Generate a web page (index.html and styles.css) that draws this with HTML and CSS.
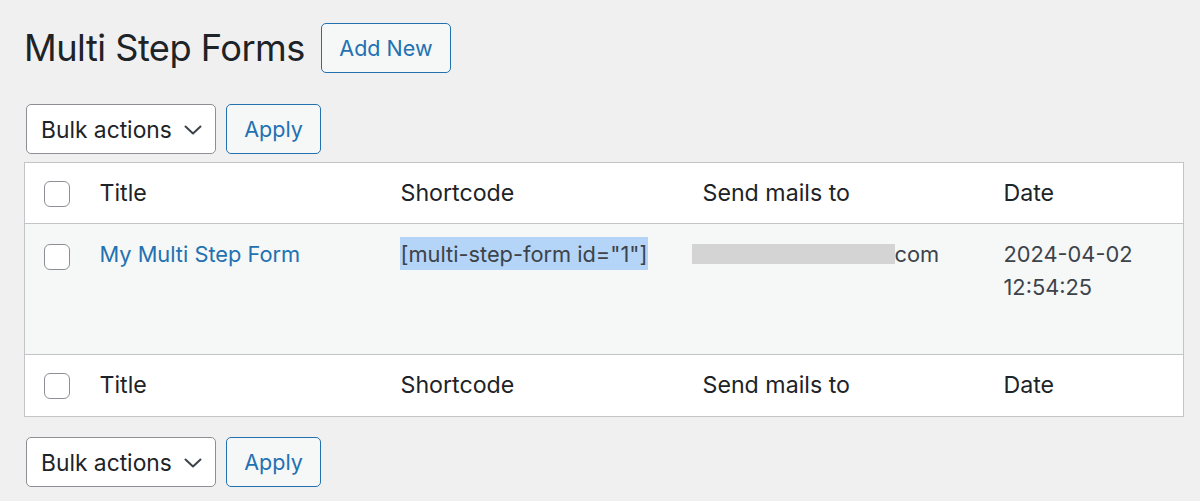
FILE: index.html
```html
<!DOCTYPE html>
<html lang="en">
<head>
<meta charset="utf-8">
<title>Multi Step Forms</title>
<link rel="stylesheet" href="styles.css">
</head>
<body>
<div class="wrap">
  <div class="page-header">
    <h1 class="page-title">Multi Step Forms</h1>
    <a class="button add-new" href="#">Add New</a>
  </div>

  <div class="tablenav top">
    <div class="select">
      <span>Bulk actions</span>
      <svg class="chevron" width="18" height="10" viewBox="0 0 18 10"><path d="M1.5 1.5 L9 8.5 L16.5 1.5" fill="none" stroke="#3c434a" stroke-width="2" stroke-linecap="round" stroke-linejoin="round"/></svg>
    </div>
    <a class="button" href="#">Apply</a>
  </div>

  <table class="list-table">
    <colgroup>
      <col class="c-cb"><col class="c-title"><col class="c-short"><col class="c-mail"><col class="c-date">
    </colgroup>
    <thead>
      <tr>
        <th class="cb"><span class="checkbox"></span></th>
        <th>Title</th>
        <th>Shortcode</th>
        <th>Send mails to</th>
        <th>Date</th>
      </tr>
    </thead>
    <tbody>
      <tr class="alt">
        <td class="cb"><span class="checkbox"></span></td>
        <td><a class="row-title" href="#">My Multi Step Form</a></td>
        <td><span class="selected">[multi-step-form id="1"]</span></td>
        <td><span class="redact"></span><span class="mail-end">com</span></td>
        <td>2024-04-02<br>12:54:25</td>
      </tr>
    </tbody>
    <tfoot>
      <tr>
        <th class="cb"><span class="checkbox"></span></th>
        <th>Title</th>
        <th>Shortcode</th>
        <th>Send mails to</th>
        <th>Date</th>
      </tr>
    </tfoot>
  </table>

  <div class="tablenav bottom">
    <div class="select">
      <span>Bulk actions</span>
      <svg class="chevron" width="18" height="10" viewBox="0 0 18 10"><path d="M1.5 1.5 L9 8.5 L16.5 1.5" fill="none" stroke="#3c434a" stroke-width="2" stroke-linecap="round" stroke-linejoin="round"/></svg>
    </div>
    <a class="button" href="#">Apply</a>
  </div>
</div>
</body>
</html>
```

FILE: styles.css
```css
html, body {
  margin: 0;
  padding: 0;
  background: #f0f0f1;
}
body {
  font-family: Inter, "Noto Sans", Roboto, sans-serif;
  color: #1d2327;
  font-size: 21.8px;
}
.wrap {
  padding: 23px 16px 0 24px;
}
.page-header {
  display: flex;
  align-items: center;
  gap: 16px;
  height: 50px;
}
.page-title {
  margin: 0;
  font-size: 36.2px;
  font-weight: 400;
  line-height: 50px;
  letter-spacing: -0.5px;
  color: #1d2327;
  white-space: nowrap;
}
.button {
  display: inline-flex;
  align-items: center;
  justify-content: center;
  box-sizing: border-box;
  height: 50px;
  padding: 0;
  border: 1px solid #2271b1;
  border-radius: 5px;
  background: #f6f7f7;
  color: #2271b1;
  text-decoration: none;
  font-size: 21.5px;
  white-space: nowrap;
  flex: none;
}
.add-new {
  width: 130px;
}
.tablenav {
  display: flex;
  align-items: center;
  gap: 10px;
  height: 50px;
}
.tablenav.top {
  margin-top: 31px;
  margin-bottom: 8px;
}
.tablenav.bottom {
  margin-top: 20px;
}
.tablenav .button {
  width: 95px;
}
.select {
  margin-left: 2px;
  box-sizing: border-box;
  width: 190px;
  height: 50px;
  display: flex;
  align-items: center;
  justify-content: space-between;
  padding: 0 13px 0 14px;
  background: #fff;
  border: 1px solid #8c8f94;
  border-radius: 5px;
  color: #1d2327;
  font-size: 22.8px;
  white-space: nowrap;
}
.chevron {
  display: block;
  margin-top: 1px;
}
.list-table {
  width: 100%;
  border-collapse: collapse;
  table-layout: fixed;
  background: #fff;
  border: 1px solid #c3c4c7;
}
.c-cb { width: 62px; }
.c-title { width: 301px; }
.c-short { width: 302px; }
.c-mail { width: 301px; }
.list-table th {
  font-weight: 400;
  text-align: left;
  padding: 0 13px;
  height: 60px;
  vertical-align: middle;
  line-height: 33px;
  font-size: 23.2px;
  color: #1d2327;
}
.list-table thead th {
  border-bottom: 1px solid #c3c4c7;
}
.list-table tfoot th {
  border-top: 1px solid #c3c4c7;
  height: 61px;
}
.list-table th.cb, .list-table td.cb {
  padding: 0 0 0 19px;
}
.list-table td {
  vertical-align: top;
  padding: 14px 13px 0;
  height: 116px;
  line-height: 33px;
  color: #3c434a;
}
.list-table td.cb {
  padding-top: 20px;
  height: 110px;
}
.alt td {
  background: #f6f7f7;
}
.checkbox {
  display: block;
  box-sizing: border-box;
  width: 26px;
  height: 26px;
  border: 1px solid #8c8f94;
  border-radius: 6px;
  background: #fff;
}
.list-table th .checkbox {
  margin-top: 1px;
}
.row-title {
  color: #2271b1;
  text-decoration: none;
}
.selected {
  background: #b4d4f8;
  padding: 4px 1px 3px;
  margin-left: -1px;
}
.redact {
  display: inline-block;
  width: 203px;
  height: 20px;
  margin-left: -11px;
  vertical-align: -2px;
  background: #d4d4d4;
}
.mail-end {
  margin-left: 0;
}
```
